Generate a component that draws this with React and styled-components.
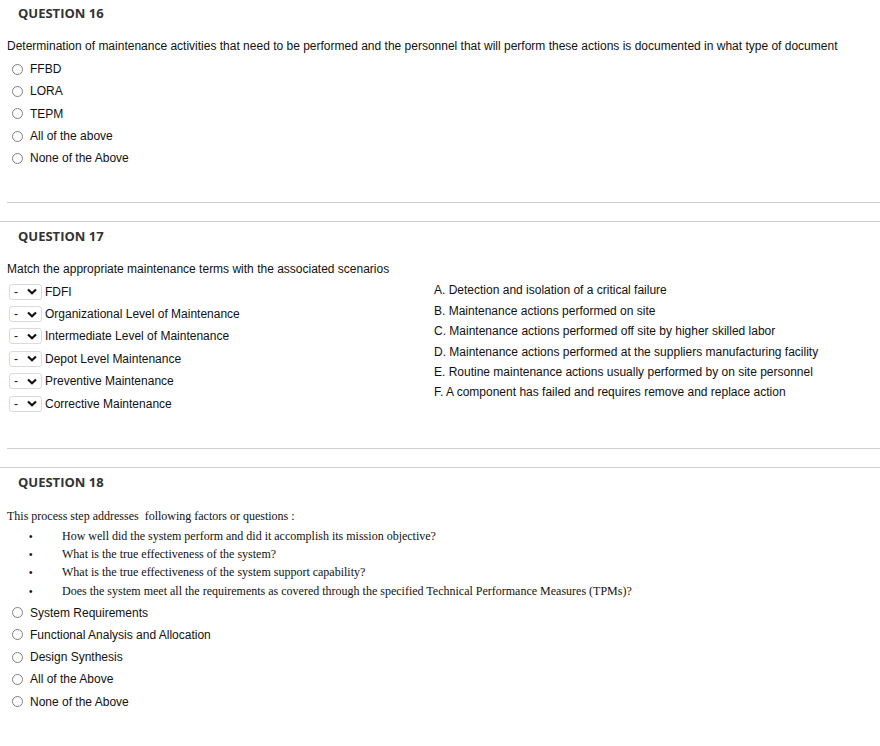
import React from "react";
import styled, { createGlobalStyle } from "styled-components";

const GlobalStyle = createGlobalStyle`
  html, body {
    margin: 0;
    padding: 0;
    background: #fff;
  }
  body {
    font-family: "Liberation Sans", Arial, sans-serif;
    font-size: 12px;
    color: #111;
  }
`;

const Page = styled.div`
  width: 880px;
`;

const Question = styled.section`
  padding-bottom: ${(p) => p.tail || 34}px;
`;

const Heading = styled.h3`
  margin: 0;
  height: 26px;
  line-height: 26px;
  padding-left: 18px;
  font-family: "Open Sans", sans-serif;
  font-size: 13px;
  font-weight: 700;
  color: #333;
`;

const Body = styled.div`
  padding: ${(p) => p.top || 12}px 0 0 7px;
`;

const Prompt = styled.div`
  line-height: 16px;
  height: 16px;
  margin-bottom: ${(p) => p.gap || 3}px;
  font-family: ${(p) =>
    p.serif ? '"Liberation Serif", "Times New Roman", serif' : '"Liberation Sans", Arial, sans-serif'};
  font-size: 12px;
`;

const Options = styled.div`
  display: flex;
  flex-direction: column;
`;

const Option = styled.label`
  display: flex;
  align-items: center;
  height: 22.3px;
  padding-left: 5px;
  gap: 7px;
`;

const Radio = styled.span`
  width: 9px;
  height: 9px;
  border: 1px solid #808080;
  border-radius: 50%;
  background: #fff;
  box-sizing: content-box;
`;

const InnerLine = styled.div`
  margin-left: 7px;
  height: 1px;
  background: #cfcfcf;
`;

const OuterLine = styled.div`
  margin-top: 18px;
  height: 1px;
  background: #cfcfcf;
  margin-bottom: 1px;
`;

const MatchGrid = styled.div`
  display: grid;
  grid-template-columns: 427px 1fr;
`;

const MatchRow = styled.div`
  display: flex;
  align-items: center;
  height: 22.4px;
  gap: 3px;
  padding-left: 2px;
`;

const Select = styled.span`
  display: flex;
  align-items: center;
  justify-content: space-between;
  width: 33px;
  height: 16px;
  box-sizing: border-box;
  border: 1px solid #dadada;
  border-radius: 3px;
  padding: 0 4px;
  font-size: 12px;
  color: #111;
`;

const Answers = styled.div`
  display: flex;
  flex-direction: column;
`;

const Answer = styled.div`
  height: 20.4px;
  line-height: 20.4px;
  white-space: nowrap;
`;

const Bullets = styled.ul`
  list-style: none;
  margin: 0 0 1px 0;
  padding: 0;
  font-family: "Liberation Serif", "Times New Roman", serif;
  font-size: 12px;
`;

const Bullet = styled.li`
  display: flex;
  align-items: center;
  height: 18.4px;
  padding-left: 22px;
  &::before {
    content: "•";
    width: 33px;
    font-family: "Liberation Sans", Arial, sans-serif;
    font-size: 10px;
  }
`;

const Chevron = () => (
  <svg width="10" height="7" viewBox="0 0 10 7">
    <path d="M1 1.5 L5 5.2 L9 1.5" fill="none" stroke="#111" strokeWidth="2.2" />
  </svg>
);

const RadioList = ({ items }) => (
  <Options>
    {items.map((t) => (
      <Option key={t}>
        <Radio />
        {t}
      </Option>
    ))}
  </Options>
);

const Divider = () => (
  <div>
    <InnerLine />
    <OuterLine />
  </div>
);

const terms = [
  "FDFI",
  "Organizational Level of Maintenance",
  "Intermediate Level of Maintenance",
  "Depot Level Maintenance",
  "Preventive Maintenance",
  "Corrective Maintenance",
];

const answers = [
  "A. Detection and isolation of a critical failure",
  "B. Maintenance actions performed on site",
  "C. Maintenance actions performed off site by higher skilled labor",
  "D. Maintenance actions performed at the suppliers manufacturing facility",
  "E. Routine maintenance actions usually performed by on site personnel",
  "F. A component has failed and requires remove and replace action",
];

const factors = [
  "How well did the system perform and did it accomplish its mission objective?",
  "What is the true effectiveness of the system?",
  "What is the true effectiveness of the system support capability?",
  "Does the system meet all the requirements as covered through the specified Technical Performance Measures (TPMs)?",
];

export default function App() {
  return (
    <Page>
      <GlobalStyle />
      <Question tail={33}>
        <Heading>QUESTION 16</Heading>
        <Body>
          <Prompt gap={4}>
            Determination of maintenance activities that need to be performed and the personnel that will perform these actions is documented in what type of document
          </Prompt>
          <RadioList items={["FFBD", "LORA", "TEPM", "All of the above", "None of the Above"]} />
        </Body>
      </Question>
      <Divider />
      <Question tail={33}>
        <Heading>QUESTION 17</Heading>
        <Body>
          <Prompt>Match the appropriate maintenance terms with the associated scenarios</Prompt>
          <MatchGrid>
            <div>
              {terms.map((t) => (
                <MatchRow key={t}>
                  <Select>
                    -
                    <Chevron />
                  </Select>
                  {t}
                </MatchRow>
              ))}
            </div>
            <Answers>
              {answers.map((a) => (
                <Answer key={a}>{a}</Answer>
              ))}
            </Answers>
          </MatchGrid>
        </Body>
      </Question>
      <Divider />
      <Question>
        <Heading>QUESTION 18</Heading>
        <Body top={13}>
          <Prompt serif>This process step addresses&nbsp; following factors or questions :</Prompt>
          <Bullets>
            {factors.map((f) => (
              <Bullet key={f}>{f}</Bullet>
            ))}
          </Bullets>
          <RadioList
            items={[
              "System Requirements",
              "Functional Analysis and Allocation",
              "Design Synthesis",
              "All of the Above",
              "None of the Above",
            ]}
          />
        </Body>
      </Question>
    </Page>
  );
}
